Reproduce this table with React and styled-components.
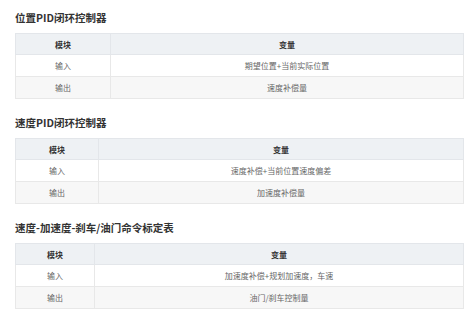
import React from "react";
import styled, { createGlobalStyle } from "styled-components";

const GlobalStyle = createGlobalStyle`
  body {
    margin: 0;
    background: #fff;
    font-family: "Noto Sans CJK SC", "Liberation Sans", sans-serif;
  }
`;

const Page = styled.div`
  padding: 10px 10px 0 15px;
  display: flex;
  flex-direction: column;
  gap: 16px;
`;

const Section = styled.section`
  display: flex;
  flex-direction: column;
  gap: 7px;
`;

const Title = styled.h3`
  margin: 0;
  font-size: 10.5px;
  line-height: 16px;
  font-weight: 700;
  color: #333;
`;

const Table = styled.table`
  width: 449px;
  border-collapse: collapse;
  table-layout: fixed;
  font-size: 8px;
  border: 1px solid #e6e8eb;
`;

const Th = styled.th`
  height: 21px;
  box-sizing: border-box;
  padding: 0 4px;
  background: #eef1f4;
  color: #333;
  font-weight: 700;
  text-align: center;
  border: 1px solid #e3e6ea;
  width: ${(props) => (props.width ? props.width : "auto")};
`;

const Tr = styled.tr`
  background: ${(props) => (props.even ? "#f7f7f7" : "#fff")};
`;

const Td = styled.td`
  height: 22px;
  box-sizing: border-box;
  padding: 0 4px;
  color: #666;
  text-align: center;
  border: 1px solid #e8e8e8;
`;

const sections = [
  {
    title: "位置PID闭环控制器",
    first: "95px",
    rows: [
      ["输入", "期望位置+当前实际位置"],
      ["输出", "速度补偿量"],
    ],
  },
  {
    title: "速度PID闭环控制器",
    first: "83px",
    rows: [
      ["输入", "速度补偿+当前位置速度偏差"],
      ["输出", "加速度补偿量"],
    ],
  },
  {
    title: "速度-加速度-刹车/油门命令标定表",
    first: "79px",
    rows: [
      ["输入", "加速度补偿+规划加速度，车速"],
      ["输出", "油门/刹车控制量"],
    ],
  },
];

const App = () => {
  return (
    <>
      <GlobalStyle />
      <Page>
        {sections.map((s, i) => (
          <Section key={i}>
            <Title>{s.title}</Title>
            <Table>
              <thead>
                <tr>
                  <Th width={s.first}>模块</Th>
                  <Th>变量</Th>
                </tr>
              </thead>
              <tbody>
                {s.rows.map((r, j) => (
                  <Tr key={j} even={j % 2 === 1}>
                    <Td>{r[0]}</Td>
                    <Td>{r[1]}</Td>
                  </Tr>
                ))}
              </tbody>
            </Table>
          </Section>
        ))}
      </Page>
    </>
  );
};

export default App;
